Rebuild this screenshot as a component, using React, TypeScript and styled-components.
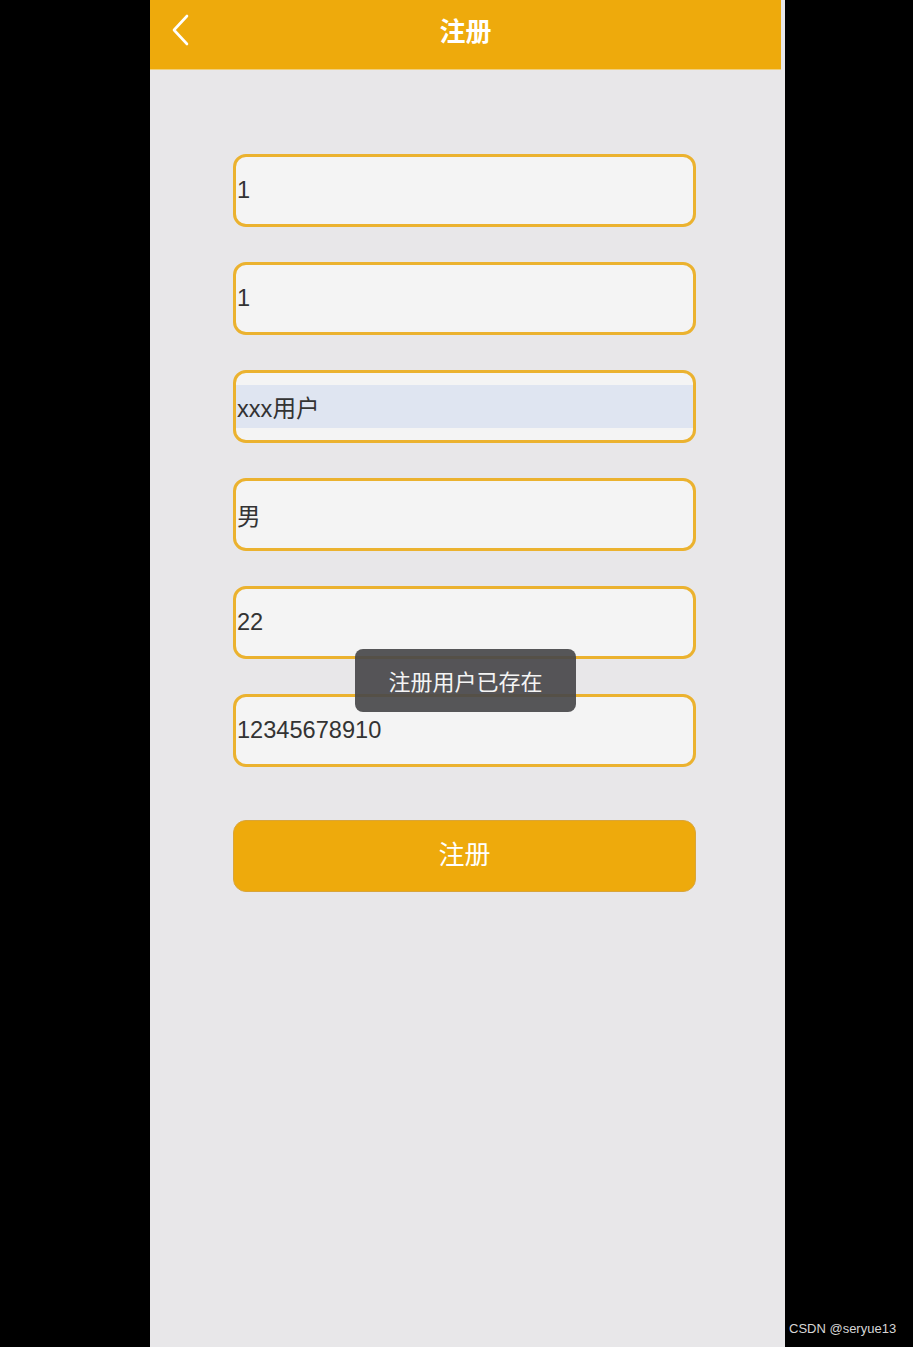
import React from "react";
import styled, { createGlobalStyle } from "styled-components";

const GlobalStyle = createGlobalStyle`
  html, body {
    margin: 0;
    padding: 0;
    background: #000;
  }
  body {
    font-family: "Liberation Sans", "Noto Sans CJK SC", Arial, sans-serif;
  }
  * { box-sizing: border-box; }
`;

const Stage = styled.div`
  position: relative;
  width: 913px;
  height: 1347px;
  background: #000;
  overflow: hidden;
`;

const Phone = styled.div`
  margin-left: 150px;
  width: 635px;
  height: 1347px;
  background: #e8e7e9;
  display: flex;
  flex-direction: column;
`;

const Header = styled.header`
  width: 631px;
  height: 70px;
  background: #eeaa0c;
  border-bottom: 1px solid #f0cf7c;
  display: flex;
  align-items: center;
  justify-content: center;
  position: relative;
  flex-shrink: 0;
`;

const BackButton = styled.button`
  position: absolute;
  left: 16px;
  top: 12px;
  width: 30px;
  height: 36px;
  padding: 0;
  border: none;
  background: transparent;
  display: flex;
  align-items: center;
  justify-content: center;
  cursor: pointer;
`;

const Title = styled.h1`
  margin: 0 0 10px 0;
  color: #fff;
  font-size: 26px;
  font-weight: bold;
  line-height: 1;
  font-family: "Noto Sans CJK SC", sans-serif;
`;

const Form = styled.form`
  position: relative;
  margin: 84px 0 0 83px;
  width: 463px;
  display: flex;
  flex-direction: column;
  gap: 35px;
`;

const Field = styled.div`
  height: 73px;
  border: 3px solid #ebb22f;
  border-radius: 13px;
  background: #f4f4f4;
  display: flex;
  align-items: center;
`;

const Input = styled.input<{ $highlight?: boolean }>`
  width: 100%;
  height: 43px;
  border: none;
  outline: none;
  margin: 0;
  padding: 0 0 0 1px;
  font-family: "Liberation Sans", "Noto Sans CJK SC", Arial, sans-serif;
  font-size: 23.6px;
  color: #333;
  background: ${(p) => (p.$highlight ? "#dfe5f1" : "transparent")};
`;

const SubmitButton = styled.button`
  margin-top: 18px;
  height: 72px;
  border: 1px solid #d9a53a;
  border-radius: 13px;
  background: #eeaa0c;
  color: #fff;
  font-size: 26px;
  font-family: "Noto Sans CJK SC", sans-serif;
  cursor: pointer;
  padding: 0 0 8px 0;
`;

const Toast = styled.div`
  position: absolute;
  left: 122px;
  top: 495px;
  width: 221px;
  height: 63px;
  background: rgba(72, 72, 74, 0.92);
  border-radius: 8px;
  color: #f4f4f4;
  font-size: 22px;
  font-family: "Noto Sans CJK SC", sans-serif;
  display: flex;
  align-items: center;
  justify-content: center;
  padding-bottom: 2px;
`;

const Watermark = styled.div`
  position: absolute;
  left: 789px;
  top: 1321px;
  color: #d6d6d6;
  font-size: 13px;
  font-family: "Liberation Sans", Arial, sans-serif;
`;

const fields = [
  { value: "1" },
  { value: "1" },
  { value: "xxx用户", highlight: true },
  { value: "男" },
  { value: "22" },
  { value: "12345678910" },
];

export default function App() {
  return (
    <>
      <GlobalStyle />
      <Stage>
        <Phone>
          <Header>
            <BackButton type="button" aria-label="返回">
              <svg width="20" height="32" viewBox="0 0 20 32">
                <path
                  d="M16 2 L3 16 L16 30"
                  fill="none"
                  stroke="#fff"
                  strokeWidth="2.6"
                  strokeLinecap="round"
                  strokeLinejoin="round"
                />
              </svg>
            </BackButton>
            <Title>注册</Title>
          </Header>
          <Form onSubmit={(e) => e.preventDefault()}>
            {fields.map((f, i) => (
              <Field key={i}>
                <Input readOnly value={f.value} $highlight={f.highlight} />
              </Field>
            ))}
            <SubmitButton type="submit">注册</SubmitButton>
            <Toast>注册用户已存在</Toast>
          </Form>
        </Phone>
        <Watermark>CSDN @seryue13</Watermark>
      </Stage>
    </>
  );
}
